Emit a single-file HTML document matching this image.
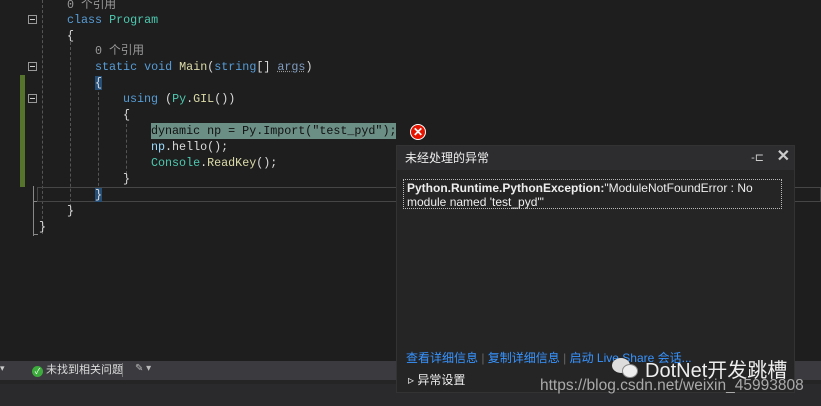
<!DOCTYPE html>
<html><head><meta charset="utf-8"><style>
*{margin:0;padding:0;box-sizing:border-box}
body{width:821px;height:406px;background:#1e1e1e;overflow:hidden;position:relative;font-family:"Liberation Mono","Noto Sans CJK SC",monospace;}
.l{position:absolute;font-size:11.7px;line-height:16px;white-space:pre;color:#dcdcdc}
.k{color:#569cd6}.t{color:#4ec9b0}.m{color:#dcdcaa}.g{color:#9a9a9a}.v{color:#9cdcfe}
.ui{font-family:"Liberation Sans","Noto Sans CJK SC",sans-serif}
.dash{position:absolute;width:0;border-left:1px dashed #555}
.box{position:absolute;width:9px;height:9px;border:1px solid #999;}
.box:after{content:"";position:absolute;left:1px;top:3px;width:5px;height:1px;background:#ccc}
</style></head><body>
<div class="dash" style="left:42px;top:0;height:234px"></div>
<div class="dash" style="left:70px;top:42px;height:170px"></div>
<div class="dash" style="left:98px;top:92px;height:104px"></div>
<div class="dash" style="left:126px;top:124px;height:50px"></div>
<div style="position:absolute;left:20px;top:75px;width:5px;height:112px;background:#57742d"></div>
<div class="box" style="left:28px;top:15px"></div>
<div class="box" style="left:28px;top:62px"></div>
<div class="box" style="left:28px;top:94px"></div>
<div style="position:absolute;left:33px;top:186px;width:1px;height:50px;background:#888"></div>
<div style="position:absolute;left:33px;top:201px;width:5px;height:1px;background:#888"></div>
<div style="position:absolute;left:33px;top:234px;width:5px;height:1px;background:#888"></div>
<div style="position:absolute;left:37px;top:187px;width:784px;height:15px;border:1px solid #464646"></div>
<div class="l g" style="left:67px;top:-3px">0 个引用</div>
<div class="l" style="left:67px;top:12px"><span class="k">class</span> <span class="t">Program</span></div>
<div class="l" style="left:67px;top:28px">{</div>
<div class="l g" style="left:95px;top:43px">0 个引用</div>
<div class="l" style="left:95px;top:59px"><span class="k">static void</span> <span class="m">Main</span>(<span class="k">string</span>[] <span style="color:#7f9cc0;text-decoration:underline dotted #999">args</span>)</div>
<div class="l" style="left:95px;top:75px"><span style="background:#264f78">{</span></div>
<div class="l" style="left:123px;top:91px"><span class="k">using</span> (<span class="t">Py</span>.<span class="m">GIL</span>())</div>
<div class="l" style="left:123px;top:107px">{</div>
<div class="l" style="left:151px;top:123px;background:#6b8e85;color:#111">dynamic np = Py.Import("test_pyd");</div>
<div class="l" style="left:151px;top:139px"><span class="v">np</span>.hello();</div>
<div class="l" style="left:151px;top:155px"><span class="t">Console</span>.<span class="m">ReadKey</span>();</div>
<div class="l" style="left:123px;top:171px">}</div>
<div class="l" style="left:95px;top:187px"><span style="background:#264f78">}</span></div>
<div class="l" style="left:67px;top:203px">}</div>
<div class="l" style="left:39px;top:219px">}</div>
<div style="position:absolute;left:410px;top:124px;width:16px;height:16px;border-radius:50%;background:#e51400;border:1px solid #fff;color:#fff;font:bold 12px/14px 'Liberation Sans';text-align:center">✕</div>
<div style="position:absolute;left:0;top:361px;width:821px;height:19px;background:#3a3a3f"></div>
<div style="position:absolute;left:0;top:380px;width:821px;height:26px;background:#2a2a2d;border-top:4px solid #252526"></div>
<div class="ui" style="position:absolute;left:0;top:363px;font-size:9px;color:#ccc">▾</div>
<div class="ui" style="position:absolute;left:32px;top:363px;font-size:11px;color:#ddd;line-height:14px"><span style="display:inline-block;width:11px;height:11px;border-radius:50%;background:#3cac3c;color:#fff;font-size:8px;text-align:center;line-height:11px;vertical-align:-1px">✓</span> 未找到相关问题</div>
<div style="position:absolute;left:122px;top:363px;width:1px;height:14px;background:#777"></div>
<div class="ui" style="position:absolute;left:135px;top:363px;font-size:10px;color:#bbb">✎ ▾</div>
<div style="position:absolute;left:396px;top:145px;width:399px;height:248px;background:#252526;border:1px solid #333">
 <div class="ui" style="height:24px;background:#2d2d30;color:#eee;font-size:12px;line-height:24px;padding-left:8px">未经处理的异常
  <span style="position:absolute;right:30px;top:0;color:#ccc;font-size:11px">-⊏</span>
  <span style="position:absolute;right:4px;top:-1px;color:#ccc;font-size:16px;font-weight:bold">✕</span></div>
 <div class="ui" style="position:absolute;left:6px;top:33px;width:379px;height:30px;border:1px dotted #bbb;color:#eee;font-size:12px;line-height:14px;padding:1px 3px"><b>Python.Runtime.PythonException:</b>"ModuleNotFoundError : No module named 'test_pyd'"</div>
 <div class="ui" style="position:absolute;left:9px;top:203px;font-size:12px;color:#3794ff;white-space:nowrap">查看详细信息 <span style="color:#666">|</span> 复制详细信息 <span style="color:#666">|</span> 启动 Live Share 会话...</div>
 <div class="ui" style="position:absolute;left:11px;top:225px;font-size:12px;color:#eee">▹ 异常设置</div>
</div>
<div style="position:absolute;left:612px;top:358px;width:18px;height:15px;border-radius:50%;background:#ddd"></div>
<div style="position:absolute;left:622px;top:364px;width:16px;height:14px;border-radius:50%;background:#eee;border:1px solid #888"></div>
<div class="ui" style="position:absolute;left:645px;top:354px;font-size:20px;color:#eee;white-space:nowrap">DotNet开发跳槽</div>
<div class="ui" style="position:absolute;left:540px;top:377px;font-size:15.5px;color:#aaa;white-space:nowrap">https://blog.csdn.net/weixin_45993808</div>
</body></html>
